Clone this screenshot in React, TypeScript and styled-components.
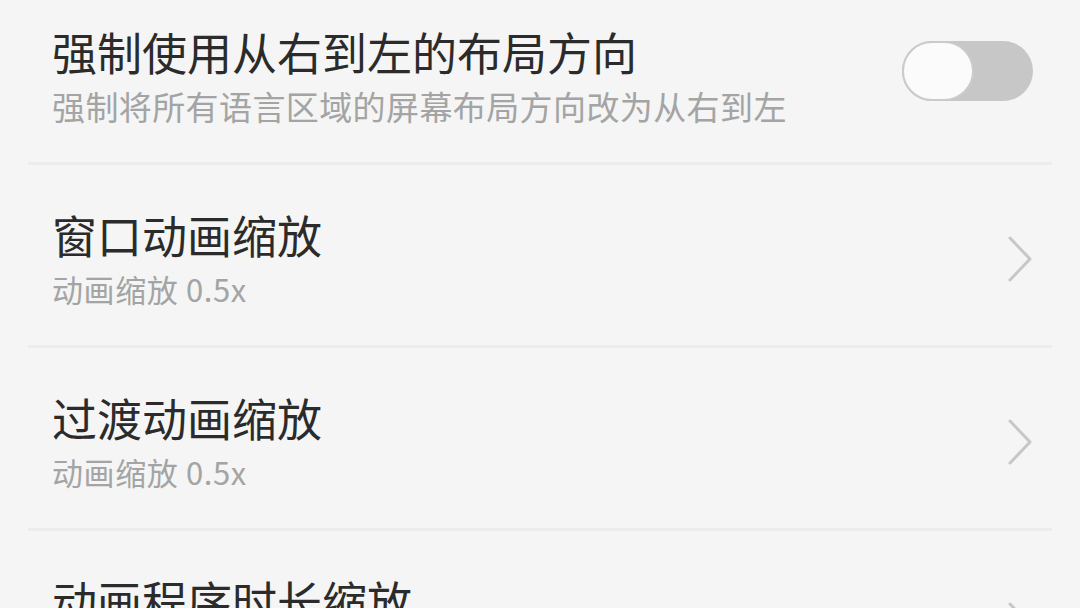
import React from 'react';
import styled, { createGlobalStyle, css } from 'styled-components';

const GlobalStyle = createGlobalStyle`
  html, body {
    margin: 0;
    padding: 0;
    background: #f4f5f4;
  }
  body {
    font-family: "Noto Sans CJK SC", "Noto Sans", sans-serif;
    -webkit-font-smoothing: antialiased;
  }
`;

const Page = styled.div`
  height: 608px;
  overflow: hidden;
  padding: 0 28px;
  background: #f4f5f4;
`;

const List = styled.div`
  display: flex;
  flex-direction: column;
`;

const Row = styled.div<{ $lead?: boolean }>`
  display: flex;
  align-items: center;
  justify-content: space-between;
  padding: ${(p) => (p.$lead ? '22px 19px 33px 24px' : '42px 19px 34px 24px')};
  border-bottom: 3px solid #ebedeb;
`;

const TextCol = styled.div`
  display: flex;
  flex-direction: column;
`;

const Title = styled.div<{ $lead?: boolean }>`
  color: #2b2b2b;
  font-weight: 400;
  white-space: nowrap;
  font-size: 45px;
  line-height: ${(p) => (p.$lead ? '60px' : '56px')};
`;

const Sub = styled.div<{ $lead?: boolean }>`
  color: #a3a4a3;
  white-space: nowrap;
  ${(p) =>
    p.$lead
      ? css`
          font-size: 33px;
          line-height: 46px;
          letter-spacing: 0.4px;
          margin-top: 1px;
        `
      : css`
          font-size: 31px;
          line-height: 44px;
          letter-spacing: 0.6px;
          margin-top: 4px;
        `}
`;

const Track = styled.div<{ $on?: boolean }>`
  position: relative;
  width: 131px;
  height: 60px;
  border-radius: 30px;
  background: ${(p) => (p.$on ? '#2f8ff0' : '#c7c7c7')};
  margin-bottom: 10px;
  flex-shrink: 0;
`;

const Knob = styled.div<{ $on?: boolean }>`
  position: absolute;
  top: 0;
  left: ${(p) => (p.$on ? '59px' : '0')};
  width: 72px;
  height: 60px;
  box-sizing: border-box;
  border-radius: 30px;
  background: #fbfbfb;
  border: 2px solid #cbcbcb;
`;

const ChevronBox = styled.div`
  width: 26px;
  height: 46px;
  flex-shrink: 0;
  display: flex;
`;

function Chevron() {
  return (
    <ChevronBox>
      <svg width="26" height="46" viewBox="0 0 26 46">
        <polyline
          points="3,2 23,23 3,44"
          fill="none"
          stroke="#c6c7c6"
          strokeWidth="3"
          strokeLinecap="round"
          strokeLinejoin="round"
        />
      </svg>
    </ChevronBox>
  );
}

function Switch({ on }: { on?: boolean }) {
  return (
    <Track $on={on}>
      <Knob $on={on} />
    </Track>
  );
}

const items = [
  { title: '窗口动画缩放', sub: '动画缩放 0.5x' },
  { title: '过渡动画缩放', sub: '动画缩放 0.5x' },
  { title: '动画程序时长缩放', sub: '动画缩放 0.5x' },
];

export default function App() {
  return (
    <>
      <GlobalStyle />
      <Page>
        <List>
          <Row $lead>
            <TextCol>
              <Title $lead>强制使用从右到左的布局方向</Title>
              <Sub $lead>强制将所有语言区域的屏幕布局方向改为从右到左</Sub>
            </TextCol>
            <Switch />
          </Row>
          {items.map((it) => (
            <Row key={it.title}>
              <TextCol>
                <Title>{it.title}</Title>
                <Sub>{it.sub}</Sub>
              </TextCol>
              <Chevron />
            </Row>
          ))}
        </List>
      </Page>
    </>
  );
}
